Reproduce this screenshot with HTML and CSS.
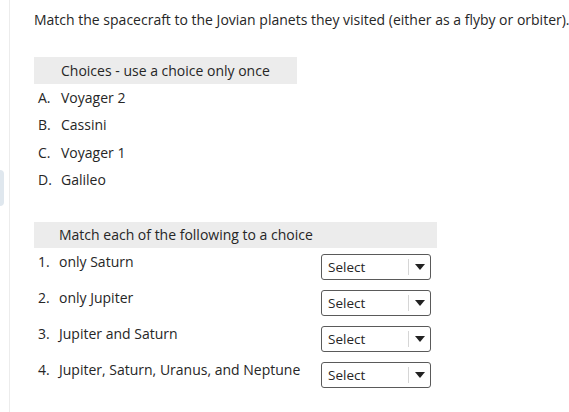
FILE: index.html
```html
<!DOCTYPE html>
<html lang="en">
  <head>
    <meta charset="UTF-8" />
    <title>Matching question</title>
    <link rel="stylesheet" href="styles.css">
  </head>
  <body>
    <div class="page">
      <div class="side-tab"></div>
      <div class="question">
        <p class="prompt">Match the spacecraft to the Jovian planets they visited (either as a flyby or orbiter).</p>

        <div class="choices">
          <div class="box-head">Choices - use a choice only once</div>
          <div class="choice"><span class="mark">A.</span>Voyager 2</div>
          <div class="choice"><span class="mark">B.</span>Cassini</div>
          <div class="choice"><span class="mark">C.</span>Voyager 1</div>
          <div class="choice"><span class="mark">D.</span>Galileo</div>
        </div>

        <div class="matches">
          <div class="box-head match-head">Match each of the following to a choice</div>
          <div class="match">
            <div class="item"><span class="num">1.</span>only Saturn</div>
            <div class="select"><span class="select-text">Select</span><span class="arrow"></span></div>
          </div>
          <div class="match">
            <div class="item"><span class="num">2.</span>only Jupiter</div>
            <div class="select"><span class="select-text">Select</span><span class="arrow"></span></div>
          </div>
          <div class="match">
            <div class="item"><span class="num">3.</span>Jupiter and Saturn</div>
            <div class="select"><span class="select-text">Select</span><span class="arrow"></span></div>
          </div>
          <div class="match">
            <div class="item"><span class="num">4.</span>Jupiter, Saturn, Uranus, and Neptune</div>
            <div class="select"><span class="select-text">Select</span><span class="arrow"></span></div>
          </div>
        </div>
      </div>
    </div>
  </body>
</html>
```

FILE: styles.css
```css
body {
  margin: 0;
  background: #ffffff;
  font-family: "Open Sans", "Liberation Sans", sans-serif;
  font-size: 14px;
  color: #262626;
}

.page {
  position: relative;
  height: 412px;
  overflow: hidden;
}

/* faint rail on the left edge */
.page::before {
  content: "";
  position: absolute;
  left: 9px;
  top: 0;
  bottom: 0;
  width: 1px;
  background: #ececec;
}

.side-tab {
  position: absolute;
  left: -4px;
  top: 170px;
  width: 8px;
  height: 36px;
  border-radius: 4px;
  background: #dfe7ee;
}

.question {
  padding: 10px 0 0 34px;
}

.prompt {
  margin: 0;
  line-height: 20px;
  white-space: nowrap;
}

.box-head {
  background: #ececec;
  height: 27px;
  line-height: 27px;
  padding-left: 27px;
}

.choices {
  width: 263px;
  margin-top: 27px;
}

.choice {
  height: 27.3px;
  line-height: 27px;
}

.mark {
  display: inline-block;
  width: 27px;
  padding-left: 4px;
  box-sizing: border-box;
}

.matches {
  width: 403px;
  margin-top: 29px;
}

.match-head {
  height: 26px;
  line-height: 26px;
  padding-left: 25px;
}

.match {
  display: grid;
  grid-template-columns: 287px 110px;
  margin-top: 10px;
}

.matches .match:nth-child(2) {
  margin-top: 6px;
}

.item {
  line-height: 16px;
}

.num {
  display: inline-block;
  width: 25px;
  padding-left: 4px;
  box-sizing: border-box;
}

.select {
  height: 26px;
  border: 1px solid #5a5a5a;
  border-radius: 3px;
  box-sizing: border-box;
  display: flex;
  align-items: center;
  font-size: 13.5px;
}

.select-text {
  flex: 1;
  padding-left: 6px;
}

.arrow {
  width: 21px;
  height: 16px;
  border-left: 1px solid #d6d6d6;
  position: relative;
}

.arrow::after {
  content: "";
  position: absolute;
  left: 6px;
  top: 5px;
  border-left: 5px solid transparent;
  border-right: 5px solid transparent;
  border-top: 6px solid #222;
}
```
